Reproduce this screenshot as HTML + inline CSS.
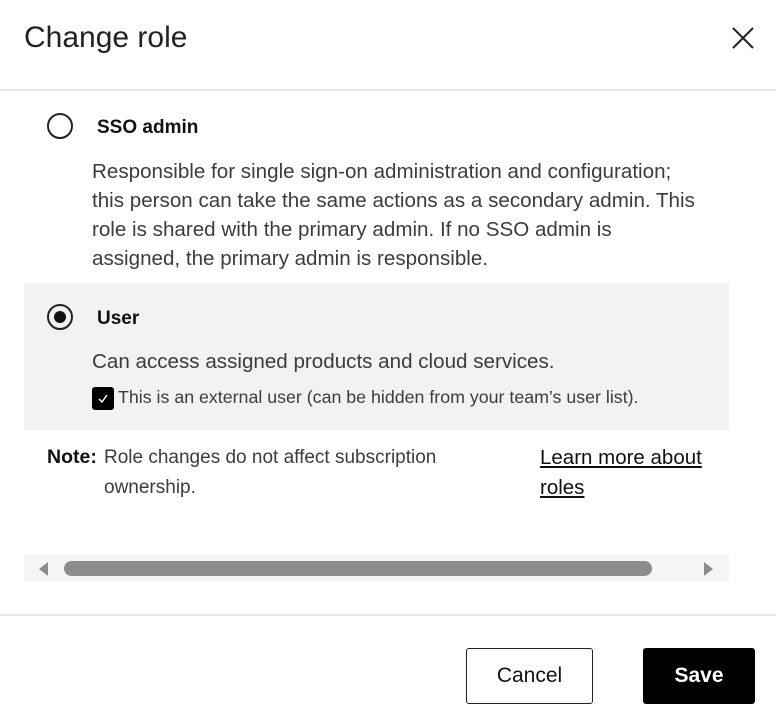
<!DOCTYPE html>
<html><head><style>
*{margin:0;padding:0;box-sizing:border-box}
body{width:776px;height:718px;background:#fff;position:relative;overflow:hidden;font-family:"Liberation Sans",sans-serif;color:#3c3c3c}
.a{position:absolute;white-space:nowrap}
.t{font-size:30px;color:#222;left:24px;top:21px}
.hr{position:absolute;left:0;width:776px;height:2px;background:#e6e6e6}
.radio{position:absolute;width:26px;height:26px;border:2px solid #222;border-radius:50%}
.lbl{font-size:19px;font-weight:bold;color:#111}
.d{font-size:20.6px;line-height:29px;left:92px}
</style></head><body>
<div class="a t">Change role</div>
<svg class="a" style="left:731px;top:26px" width="24" height="24"><path d="M2 2L22 22M22 2L2 22" stroke="#222" stroke-width="2"/></svg>
<div class="hr" style="top:89px"></div>
<div class="radio" style="left:47px;top:113px"></div>
<div class="a lbl" style="left:97px;top:117px">SSO admin</div>
<div class="a d" style="top:157px">Responsible for single sign-on administration and configuration;<br>this person can take the same actions as a secondary admin. This<br>role is shared with the primary admin. If no SSO admin is<br>assigned, the primary admin is responsible.</div>
<div class="a" style="left:24px;top:283px;width:705px;height:147px;background:#f2f2f2"></div>
<div class="radio" style="left:47px;top:304px"><div style="position:absolute;left:5px;top:5px;width:12px;height:12px;border-radius:50%;background:#111"></div></div>
<div class="a lbl" style="left:97px;top:308px">User</div>
<div class="a d" style="top:347px">Can access assigned products and cloud services.</div>
<div class="a" style="left:92px;top:387px;width:22px;height:23px;background:#000;border-radius:3px"><svg width="22" height="23"><path d="M7 12l3 3 5-7" stroke="#fff" stroke-width="1.5" fill="none"/></svg></div>
<div class="a" style="left:118px;top:387px;font-size:17.8px;color:#3c3c3c">This is an external user (can be hidden from your team’s user list).</div>
<div class="a" style="left:47px;top:446px;font-size:19.5px;font-weight:bold;color:#111">Note:</div>
<div class="a" style="left:104px;top:443px;font-size:19px;line-height:30px">Role changes do not affect subscription<br>ownership.</div>
<div class="a" style="left:540px;top:443px;font-size:20.5px;line-height:30px;color:#111;text-decoration:underline">Learn more about<br>roles</div>
<div class="a" style="left:24px;top:555px;width:705px;height:26px;background:#f5f5f5"></div>
<svg class="a" style="left:36px;top:561px" width="14" height="16"><path d="M12 1L3 8l9 7z" fill="#8c8c8c"/></svg>
<div class="a" style="left:64px;top:561px;width:588px;height:15px;background:#8c8c8c;border-radius:8px"></div>
<svg class="a" style="left:702px;top:561px" width="14" height="16"><path d="M2 1l9 7-9 7z" fill="#8c8c8c"/></svg>
<div class="hr" style="top:614px"></div>
<div class="a" style="left:466px;top:648px;width:127px;height:56px;border:1px solid #222;border-radius:3px;font-size:21px;color:#111;text-align:center;line-height:54px">Cancel</div>
<div class="a" style="left:643px;top:648px;width:112px;height:56px;background:#000;border-radius:3px;font-size:21px;color:#fff;text-align:center;line-height:56px;font-weight:bold">Save</div>
</body></html>
